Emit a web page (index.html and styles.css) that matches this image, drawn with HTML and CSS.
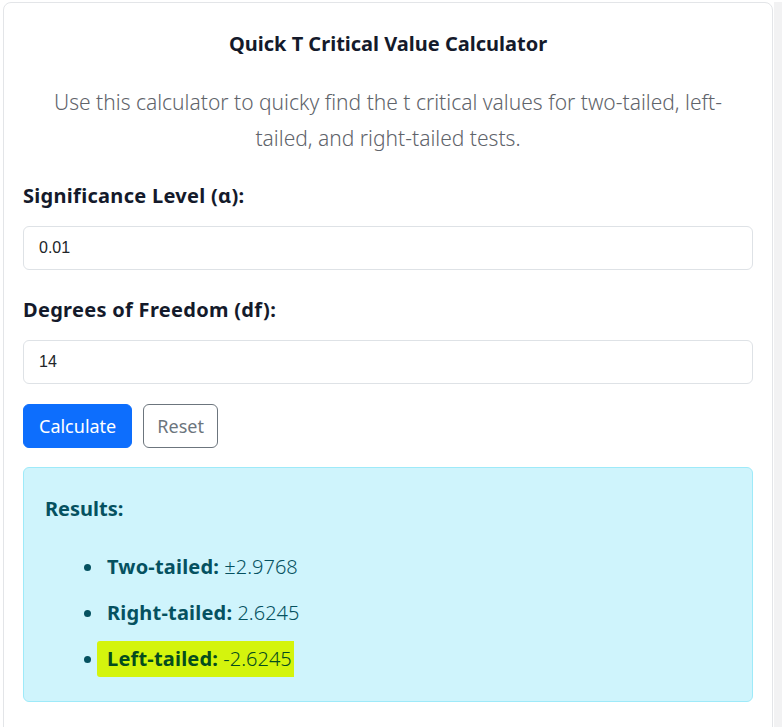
FILE: index.html
```html
<!DOCTYPE html>
<html lang="en">
<head>
<meta charset="utf-8">
<title>Quick T Critical Value Calculator</title>
<link rel="stylesheet" href="styles.css">
</head>
<body>
<div class="page">
  <div class="card">
    <h1 class="title">Quick T Critical Value Calculator</h1>
    <p class="lead">Use this calculator to quicky find the t critical values for two-tailed, left-tailed, and right-tailed tests.</p>
    <div class="field">
      <label class="label" for="alpha">Significance Level (α):</label>
      <input class="input" id="alpha" type="text" value="0.01">
    </div>
    <div class="field">
      <label class="label" for="df">Degrees of Freedom (df):</label>
      <input class="input" id="df" type="text" value="14">
    </div>
    <div class="actions">
      <button class="btn btn-primary" type="button">Calculate</button>
      <button class="btn btn-outline" type="button">Reset</button>
    </div>
    <div class="results">
      <h2 class="results-title">Results:</h2>
      <ul class="results-list">
        <li><strong>Two-tailed:</strong> ±2.9768</li>
        <li><strong>Right-tailed:</strong> 2.6245</li>
        <li><span class="highlight"><strong>Left-tailed:</strong> -2.6245</span></li>
      </ul>
    </div>
  </div>
  <div class="gutter"></div>
</div>
</body>
</html>
```
FILE: styles.css
```css
* { box-sizing: border-box; }
html, body { margin: 0; padding: 0; }
body {
  background: #ffffff;
  font-family: "Noto Sans", "Open Sans", sans-serif;
  color: #1b2233;
  height: 727px;
  overflow: hidden;
}
.page {
  display: flex;
  align-items: flex-start;
  padding: 2px 0 0 3px;
  height: 727px;
}
.card {
  flex: 1;
  border: 1px solid #e3e5e8;
  border-radius: 8px;
  padding: 21px 19px 40px 19px;
  background: #fff;
  height: 760px;
}
.gutter {
  width: 8px;
  align-self: stretch;
  background: #f2f2f3;
  margin-left: 1px;
}
.title {
  font-size: 20px;
  font-weight: 700;
  line-height: 40px;
  margin: 0;
  text-align: center;
  color: #141a2b;
}
.lead {
  font-size: 21px;
  font-weight: 300;
  line-height: 36px;
  color: #5f646b;
  text-align: center;
  margin: 20px 0 0 0;
  padding: 0 20px;
}
.field { margin-top: 28px; }
.field + .field { margin-top: 28px; }
.label {
  display: block;
  font-size: 20px;
  font-weight: 700;
  line-height: 24px;
  letter-spacing: 0.3px;
  color: #141a2b;
}
.input {
  display: block;
  width: 100%;
  height: 44px;
  margin-top: 18px;
  border: 1px solid #dee2e6;
  border-radius: 6px;
  padding: 0 15px;
  font-family: "Liberation Sans", Arial, sans-serif;
  font-size: 16px;
  color: #212529;
  background: #fff;
}
.actions {
  display: flex;
  gap: 11px;
  margin-top: 20px;
}
.btn {
  height: 44px;
  border-radius: 6px;
  font-family: inherit;
  font-size: 18px;
  padding: 0 15px;
  border: 1px solid transparent;
}
.btn-primary { background: #0d6efd; color: #fff; border-color: #0d6efd; }
.btn-outline { background: #fff; color: #6c757d; border-color: #6c757d; padding: 0 13px; }
.results {
  margin-top: 19px;
  background: #cff4fc;
  border: 1px solid #9eeaf9;
  border-radius: 6px;
  padding: 29px 21px 19px;
  color: #055160;
}
.results-title {
  margin: 0;
  font-size: 20px;
  font-weight: 700;
  line-height: 24px;
}
.results-list {
  margin: 28px 0 5px 0;
  padding-left: 62px;
  font-size: 20px;
  font-weight: 300;
  list-style: none;
}
.results-list li {
  line-height: 36px;
  margin-bottom: 10px;
  position: relative;
}
.results-list li:last-child { margin-bottom: 0; }
.results-list li::before {
  content: "";
  position: absolute;
  left: -23px;
  top: 15px;
  width: 7px;
  height: 7px;
  border-radius: 50%;
  background: #055160;
}
.results-list strong { font-weight: 700; letter-spacing: 0.2px; }
.highlight {
  display: inline-block;
  background: #d4f40d;
  margin-left: -10px;
  padding: 0 2px 0 10px;
  color: #044c1e;
  border-radius: 3px 0 0 3px;
}
```
